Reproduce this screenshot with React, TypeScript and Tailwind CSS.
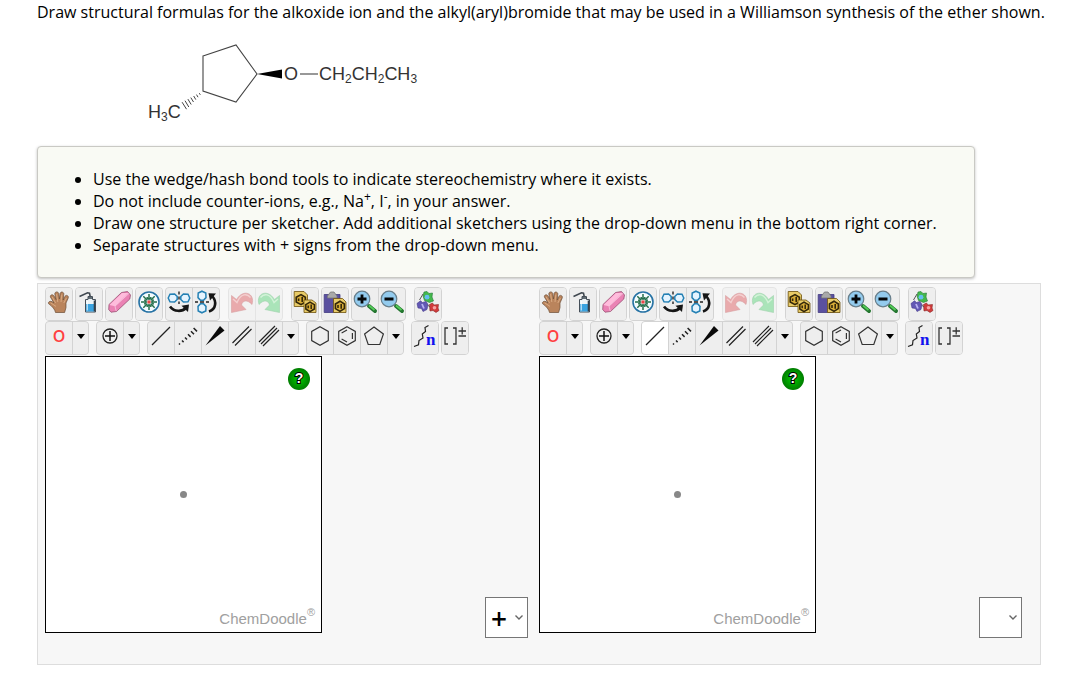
import React from 'react';

const icons: Record<string, React.ReactNode> = {
  hand: (
    <>
      <path
        d="M6.5 20.5 C6 17.5 3.5 14.5 -0.5 11.6 C-1.2 9.8 1.2 8.6 3.2 9.8 L5 11 L1.4 5 C1 2.6 3.8 2 5 4 L7 7.6 L5.8 2 C5.8 -0.6 9.2 -0.8 9.8 1.6 L10.4 7 L11.2 1.2 C12 -0.8 15 0 14.8 2.2 L14.2 8 L16 4.2 C17.4 2.4 20 3.8 19.2 6 L17 11 L17 15.5 L15.6 20.5 Z"
        fill="#ba845c"
        stroke="#6b4d36"
        strokeWidth="0.7"
      />
      <path d="M7.6 2 L8.8 10 M12.8 2.5 L12 10 M3.2 5 L6.6 11 M17.4 6 L14.8 11 M1.6 10.8 L7 14.4" stroke="#d9aa82" strokeWidth="1" fill="none" />
    </>
  ),
  bottle: (
    <>
      <path d="M0.5 4.5 L8.5 0.8 L10.5 1.2 L11.3 5" fill="none" stroke="#404850" strokeWidth="1.6" />
      <path d="M9 4.5 H13.5 V7.5 H16.5 V20 H6.5 V7.5 H9 Z" fill="#eef4f7" stroke="#444e58" />
      <path d="M7 12 H15.5 V19.5 H7 Z" fill="#3aa3e0" />
      <path d="M9.1 6 H13.4 M15.4 8.5 V19.5" stroke="#34404a" strokeWidth="1.4" />
      <path d="M8.2 9 V18.5" stroke="#fff" strokeWidth="0.9" />
    </>
  ),
  eraser: (
    <>
      <path d="M0 12.5 L12.5 0.5 L18.5 -0.5 L21.5 3 L20.8 7 L7.5 19.5 L2 20.2 L-0.3 17.5 Z" fill="#ea82b4" stroke="#8f4569" strokeWidth="0.7" />
      <path d="M0.4 13 L13 1 L19.5 1 L6 14.2 Z" fill="#ffbcdc" />
      <path d="M6 14.2 L7.2 19 M6 14.2 L20 1.4" stroke="#f8d5e6" strokeWidth="0.7" />
    </>
  ),
  clean: (
    <>
      <circle cx="10" cy="10" r="10" fill="#f5fcff" stroke="#2773a5" strokeWidth="1.6" />
      <path d="M10 2 V7.5 M10 12.5 V18 M2 10 H7.5 M12.5 10 H18 M4.3 4.3 L8 8 M12 12 L15.7 15.7 M15.7 4.3 L12 8 M8 12 L4.3 15.7" stroke="#246f4c" strokeWidth="1.5" />
      <path d="M8.2 5.4 L10 7.4 L11.8 5.4 M8.2 14.6 L10 12.6 L11.8 14.6 M5.4 8.2 L7.4 10 L5.4 11.8 M14.6 8.2 L12.6 10 L14.6 11.8 M5 8 H8 V5 M12 5 V8 H15 M5 12 H8 V15 M12 15 V12 H15" fill="none" stroke="#246f4c" strokeWidth="1.1" />
      <circle cx="10" cy="10" r="1.8" fill="#e84848" />
    </>
  ),
  flipX: (
    <>
      <path d="M-0.8 6 L1 2.2 L5.6 2 L8.2 4.5 V7.5 L5.6 10 L1 9.8 Z M20.8 6 L19 2.2 L14.4 2 L11.8 4.5 V7.5 L14.4 10 L19 9.8 Z" fill="#e5f4ff" stroke="#2480b4" strokeWidth="1.5" />
      <path d="M10 -0.5 V2.5 M10 4.5 V7.5 M10 9.5 V12" stroke="#222" strokeWidth="1.4" />
      <path d="M1 14.5 C5 20 13 20 17 16" fill="none" stroke="#161616" strokeWidth="2.6" />
      <path d="M12.5 13.8 L20 12.5 L19 20 Z" fill="#161616" />
    </>
  ),
  flipY: (
    <>
      <path d="M6 -0.8 L9.8 1 L10 5.6 L7.5 8.2 H4.5 L2 5.6 L2.2 1 Z M6 20.8 L9.8 19 L10 14.4 L7.5 11.8 H4.5 L2 14.4 L2.2 19 Z" fill="#e5f4ff" stroke="#2480b4" strokeWidth="1.5" />
      <path d="M-1 10 H2 M4 10 H8 M10 10 H13" stroke="#222" strokeWidth="1.4" />
      <path d="M13 19.5 C20.5 17 20.5 9 16.5 4.5" fill="none" stroke="#161616" strokeWidth="2.6" />
      <path d="M12.5 1.2 L20 1.6 L14 8.5 Z" fill="#161616" />
    </>
  ),
  undo: (
    <>
      <path d="M-0.5 3.5 V20.5 L14 17.5 L9.5 13 C10.5 8.5 15 7 20 12.5 C23.5 1 11 -3.5 4.5 7.5 Z" fill="#dc5f64" stroke="#b94a4e" strokeWidth="0.6" />
      <path d="M1 7 L5 10.5 C9 1.5 15 1 18.5 5.5" fill="none" stroke="#f1aaaa" strokeWidth="1.4" />
    </>
  ),
  redo: (
    <>
      <path d="M20.5 3.5 V20.5 L6 17.5 L10.5 13 C9.5 8.5 5 7 0 12.5 C-3.5 1 9 -3.5 15.5 7.5 Z" fill="#5fd27c" stroke="#49ad63" strokeWidth="0.6" />
      <path d="M19 7 L15 10.5 C11 1.5 5 1 1.5 5.5" fill="none" stroke="#b2efbd" strokeWidth="1.4" />
    </>
  ),
  copy: (
    <>
      <path d="M-0.8 -0.5 H9 L12.5 3 V14.5 H-0.8 Z" fill="#e8cb68" stroke="#6d520c" strokeWidth="0.8" />
      <path d="M1.2 5.2 L6 2.6 L10.4 5.2 V10 L6 12.6 L1.2 10 Z M3.6 6.5 V9 M7.2 5 V10" fill="#d8ad38" stroke="#33270a" strokeWidth="1.6" />
      <path d="M9 8 H17 L21 11 V20.5 H9 Z" fill="#e8cb68" stroke="#6d520c" strokeWidth="0.8" />
      <path d="M10.8 12.6 L15 10.2 L19.4 12.6 V17 L15 19.6 L10.8 17 Z M13.2 13.6 V16.2 M16.2 12.6 V17" fill="#d8ad38" stroke="#33270a" strokeWidth="1.5" />
    </>
  ),
  paste: (
    <>
      <path d="M-0.8 2.5 H15 V20.5 H-0.8 Z" fill="#5a509f" stroke="#433b80" strokeWidth="0.8" />
      <path d="M2.5 4 L5.5 0 H9 L12 4 V6 H2.5 Z" fill="#a9a9a9" stroke="#777" strokeWidth="0.8" />
      <path d="M8.5 6.5 H17.5 L21 10 V20.5 H8.5 Z" fill="#e8cb68" stroke="#6d520c" strokeWidth="0.8" />
      <path d="M10.4 12 L15 9.2 L19.4 12 V16.6 L15 19.4 L10.4 16.6 Z M13 13 V16 M16.2 12 V16.8" fill="#d8ad38" stroke="#33270a" strokeWidth="1.6" />
    </>
  ),
  zoomIn: (
    <>
      <path d="M14 14 L20 19" stroke="#247630" strokeWidth="4" strokeLinecap="round" />
      <path d="M14 13.5 L19.5 18" stroke="#55cd59" strokeWidth="1.8" />
      <circle cx="7" cy="7" r="7.8" fill="#93cbee" stroke="#687e8a" strokeWidth="1.2" />
      <path d="M2.5 7 H11.5 M7 2.5 V11.5" stroke="#05080a" strokeWidth="2.8" />
    </>
  ),
  zoomOut: (
    <>
      <path d="M14 14 L20 19" stroke="#247630" strokeWidth="4" strokeLinecap="round" />
      <path d="M14 13.5 L19.5 18" stroke="#55cd59" strokeWidth="1.8" />
      <circle cx="7" cy="7" r="7.8" fill="#93cbee" stroke="#687e8a" strokeWidth="1.2" />
      <path d="M2.5 7 H11.5" stroke="#05080a" strokeWidth="2.8" />
    </>
  ),
  templates: (
    <>
      <path d="M6 0 L9 -0.5 L11 1.5 L14.5 1 L14 5 L15.5 9 L11.5 10.5 L6.5 8.5 L5 4 Z" fill="#43b84c" stroke="#247a38" strokeWidth="0.6" />
      <path d="M-1 11.5 L2.5 8.8 L4.5 10.5 L8 9.5 L10 12.5 L9 17.5 L5 19.5 L3.5 16.5 L0 16 Z" fill="#6258b5" stroke="#443a8b" strokeWidth="0.6" />
      <path d="M11.5 12.5 L14.5 11 L16 13 L20.5 12.5 L20 16 L21 18.5 L18 20.5 L15 18.5 L12 19 Z" fill="#d03c3c" stroke="#8a2525" strokeWidth="0.6" />
      <circle cx="9" cy="5.2" r="2.4" fill="#64bdf0" />
      <path d="M4 12 L6 16.5" stroke="#b9b3f2" strokeWidth="1.8" />
      <circle cx="16.5" cy="15.8" r="1.8" fill="#f6a3a3" />
      <path d="M1.5 8 L5 2 M9.5 13 L12 15" stroke="#555" strokeWidth="1" />
    </>
  ),
  charge: (
    <>
      <circle cx="10" cy="10" r="7" fill="none" stroke="#222" strokeWidth="1.3" />
      <path d="M5 10 H15 M10 5 V15" stroke="#111" strokeWidth="1.5" />
    </>
  ),
  single: <path d="M1 19 L19 1" stroke="#222" strokeWidth="1.3" />,
  recessed: <path d="M1 17.5 L2 18.5 M4 14.5 L5.6 16.1 M7 11.5 L9 13.5 M10 8.3 L12.6 10.9 M13 5.2 L16 8.2 M15.6 2 L19 5.4" stroke="#222" strokeWidth="1.5" />,
  wedge: <path d="M0.5 19.5 L15 0 L19.5 4.5 Z" fill="#0a0a0a" />,
  double: <path d="M0.5 17 L17 0.5 M3 19.5 L19.5 3" stroke="#222" strokeWidth="1.2" />,
  triple: <path d="M0 16 L16 0 M2 18 L18 2 M4 20 L20 4" stroke="#222" strokeWidth="1.2" />,
  hexagon: <path d="M10 0.8 L18.3 5.4 V14.6 L10 19.2 L1.7 14.6 V5.4 Z" fill="none" stroke="#333" strokeWidth="1.2" />,
  benzene: (
    <path
      d="M10 0.8 L18.3 5.4 V14.6 L10 19.2 L1.7 14.6 V5.4 Z M4.6 7 L10 4 M15.4 7 V13 M10 16 L4.6 13"
      fill="none"
      stroke="#333"
      strokeWidth="1.2"
    />
  ),
  pentagon: <path d="M10 1 L19.4 8 L15.8 18.5 H4.2 L0.6 8 Z" fill="none" stroke="#333" strokeWidth="1.2" />,
  chain: (
    <>
      <path d="M-1 20.5 L3.5 18.8 L4 14.5 L8 12 L7.3 8 L10.5 5.5 L10 1.5 L13.5 -0.5" fill="none" stroke="#222" strokeWidth="1.2" />
      <text x="11" y="19" fontSize="17" fontWeight="bold" fill="#1111ee" fontFamily="Liberation Serif, serif">n</text>
    </>
  ),
  bracket: (
    <path
      d="M3 2 H0 V18 H3 M8 2 H11 V18 H8 M13.5 5 H21 M17.2 1.2 V8.5 M13.5 10 H21"
      fill="none"
      stroke="#333"
      strokeWidth="1.3"
    />
  ),
};

interface Tool {
  icon: string;
  label: string;
}

const topGroups: Tool[][][] = [
  [
    [{ icon: 'hand', label: 'Move' }],
    [{ icon: 'bottle', label: 'Clear' }],
    [{ icon: 'eraser', label: 'Erase' }],
    [{ icon: 'clean', label: 'Clean' }],
    [{ icon: 'flipX', label: 'Flip horizontally' }, { icon: 'flipY', label: 'Flip vertically' }],
  ],
  [[{ icon: 'undo', label: 'Undo' }, { icon: 'redo', label: 'Redo' }]],
  [
    [{ icon: 'copy', label: 'Copy' }],
    [{ icon: 'paste', label: 'Paste' }],
    [{ icon: 'zoomIn', label: 'Zoom in' }, { icon: 'zoomOut', label: 'Zoom out' }],
  ],
  [[{ icon: 'templates', label: 'Templates' }]],
];

const bottomGroups: Tool[][][] = [
  [[{ icon: 'element', label: 'Oxygen' }, { icon: 'arrow', label: 'More elements' }]],
  [[{ icon: 'charge', label: 'Increase charge' }, { icon: 'arrow', label: 'More attributes' }]],
  [
    [
      { icon: 'single', label: 'Single bond' },
      { icon: 'recessed', label: 'Recessed bond' },
      { icon: 'wedge', label: 'Protruding bond' },
      { icon: 'double', label: 'Double bond' },
      { icon: 'triple', label: 'Triple bond' },
      { icon: 'arrow', label: 'More bonds' },
    ],
  ],
  [
    [
      { icon: 'hexagon', label: 'Cyclohexane' },
      { icon: 'benzene', label: 'Benzene' },
      { icon: 'pentagon', label: 'Cyclopentane' },
      { icon: 'arrow', label: 'More rings' },
    ],
  ],
  [[{ icon: 'chain', label: 'Carbon chain' }], [{ icon: 'bracket', label: 'Bracket' }]],
];

const ToolButton: React.FC<{ tool: Tool; active: boolean }> = ({ tool, active }) => {
  if (tool.icon === 'arrow') {
    return (
      <button type="button" aria-label={tool.label} className="flex w-[15px] justify-center bg-[#eeeeee] pt-3">
        <svg width="8" height="5" viewBox="0 0 8 5" className="shrink-0">
          <path d="M0 0 H8 L4 5 Z" fill="#000" />
        </svg>
      </button>
    );
  }
  return (
    <button
      type="button"
      aria-label={tool.label}
      className={`flex w-[26px] justify-center pt-1 ${active ? 'bg-white' : 'bg-[#eeeeee]'}`}
    >
      {tool.icon === 'element' ? (
        <span className="font-['Open_Sans',sans-serif] text-base leading-5 font-semibold text-[#ff4040]">O</span>
      ) : (
        <svg width="20" height="20" viewBox="0 0 20 20" className="shrink-0 overflow-visible">
          {icons[tool.icon]}
        </svg>
      )}
    </button>
  );
};

const Toolbar: React.FC<{ groups: Tool[][][]; activeTool?: string; className: string }> = ({ groups, activeTool, className }) => (
  <div className={`flex ${className}`}>
    {groups.map((group, i) => (
      <div key={i} className="flex gap-0.5">
        {group.map((set) => (
          <div
            key={set[0].icon}
            className={`flex h-[34px] gap-px overflow-hidden rounded border border-[#d3d3d3] bg-[#d3d3d3] ${
              set[0].icon === 'undo' ? 'opacity-50' : ''
            }`}
          >
            {set.map((tool) => (
              <ToolButton key={tool.icon} tool={tool} active={tool.icon === activeTool} />
            ))}
          </div>
        ))}
      </div>
    ))}
  </div>
);

const Sketcher: React.FC<{ activeTool?: string }> = ({ activeTool }) => (
  <div className="mb-[5px] w-[440px]">
    <Toolbar groups={topGroups} className="gap-2" />
    <Toolbar groups={bottomGroups} activeTool={activeTool} className="gap-[7px]" />
    <div className="mt-px grid h-[277px] w-[277px] grid-rows-[1fr_auto_1fr] border border-black bg-white">
      <button type="button" aria-label="Help" className="mt-[11px] mr-[11px] h-[22px] w-[22px] justify-self-end">
        <svg width="22" height="22" viewBox="0 0 22 22">
          <defs>
            <radialGradient id="help">
              <stop offset="0" stopColor="#00cc00" />
              <stop offset="1" stopColor="#007c00" />
            </radialGradient>
          </defs>
          <circle cx="11" cy="11" r="11" fill="url(#help)" />
          <text
            x="11"
            y="15"
            textAnchor="middle"
            fontSize="14"
            fontWeight="bold"
            fontFamily="Liberation Sans, sans-serif"
            fill="#fff"
            stroke="#000"
            strokeWidth="2"
            paintOrder="stroke"
          >
            ?
          </text>
        </svg>
      </button>
      <span className="h-[7px] w-[7px] justify-self-center rounded-full bg-[#888888]" />
      <p className="mr-[6px] mb-[3px] self-end justify-self-end font-['Liberation_Sans',sans-serif] text-[15px] leading-5 text-[#a0a0a0]">
        ChemDoodle<sup className="-top-2 text-[11px] leading-none">®</sup>
      </p>
    </div>
  </div>
);

const Separator: React.FC<{ value: string; label: string }> = ({ value, label }) => (
  <div className="relative">
    <select
      aria-label={label}
      defaultValue={value}
      className="block h-[41px] w-[43px] appearance-none border border-[#767676] bg-white pl-[5px] font-['Open_Sans',sans-serif] text-[28px] leading-8 font-semibold text-black"
    >
      <option value=""></option>
      <option value="+">+</option>
    </select>
    <svg width="8" height="5" viewBox="0 0 8 5" className="pointer-events-none absolute top-[18px] right-[5px]">
      <path d="M0.5 0.5 L4 4 L7.5 0.5" fill="none" stroke="#666" strokeWidth="1.4" />
    </svg>
  </div>
);

const Molecule: React.FC = () => (
  <svg width="280" height="86" viewBox="0 0 280 86" className="ml-[108px]" fontFamily="Liberation Sans, sans-serif" fontSize="18" fill="#333">
    <path d="M58 16 L91 5 L112 34 L91 62 L58 51 Z" fill="none" stroke="#444" strokeWidth="1.1" />
    <path d="M112 34 L137 29.5 V38.5 Z" fill="#000" />
    <path
      d="M54.3 53.2 L55.3 54.8 M51.5 54.6 L53 57.2 M48.7 56 L50.8 59.6 M45.8 57.6 L48.5 62 M42.9 59.1 L46.2 64.5 M40 60.7 L43.8 67 M37.1 62.2 L41.5 69.2"
      stroke="#444"
      strokeWidth="1"
    />
    <path d="M155 34 H173" stroke="#444" strokeWidth="1.1" />
    <text x="139" y="40">O</text>
    <text x="174" y="40">
      CH<tspan fontSize="12" dy="3">2</tspan>
      <tspan dy="-3">CH</tspan><tspan fontSize="12" dy="3">2</tspan>
      <tspan dy="-3">CH</tspan><tspan fontSize="12" dy="3">3</tspan>
    </text>
    <text x="3" y="78">
      H<tspan fontSize="12" dy="3">3</tspan><tspan dy="-3">C</tspan>
    </text>
  </svg>
);

export default function App() {
  return (
    <main className="overflow-x-hidden bg-white pt-px pb-[11px] pl-[37px] font-['Open_Sans',sans-serif] text-base leading-[22px] text-black">
      <p className="whitespace-nowrap">
        Draw structural formulas for the alkoxide ion and the alkyl(aryl)bromide that may be used in a Williamson synthesis of the ether shown.
      </p>
      <div className="pt-[17px] pb-5">
        <Molecule />
      </div>
      <ul className="w-fit list-disc rounded-[4px] border border-[#c9c9c4] bg-[#f9faf4] py-[21px] pr-[37px] pl-[55px] shadow-[0_1px_3px_rgba(0,0,0,0.25)]">
        <li>Use the wedge/hash bond tools to indicate stereochemistry where it exists.</li>
        <li>
          Do not include counter-ions, e.g., Na<sup className="text-xs leading-none">+</sup>, I<sup className="text-xs leading-none">-</sup>, in your answer.
        </li>
        <li>Draw one structure per sketcher. Add additional sketchers using the drop-down menu in the bottom right corner.</li>
        <li>Separate structures with + signs from the drop-down menu.</li>
      </ul>
      <section className="mt-[5px] flex w-fit items-end border border-[#dddddd] bg-[#f7f7f7] pt-[3px] pr-[18px] pb-[26px] pl-[7px]">
        <Sketcher />
        <Separator value="+" label="Separator after first structure" />
        <div className="ml-[11px]">
          <Sketcher activeTool="single" />
        </div>
        <Separator value="" label="Separator after second structure" />
      </section>
    </main>
  );
}
